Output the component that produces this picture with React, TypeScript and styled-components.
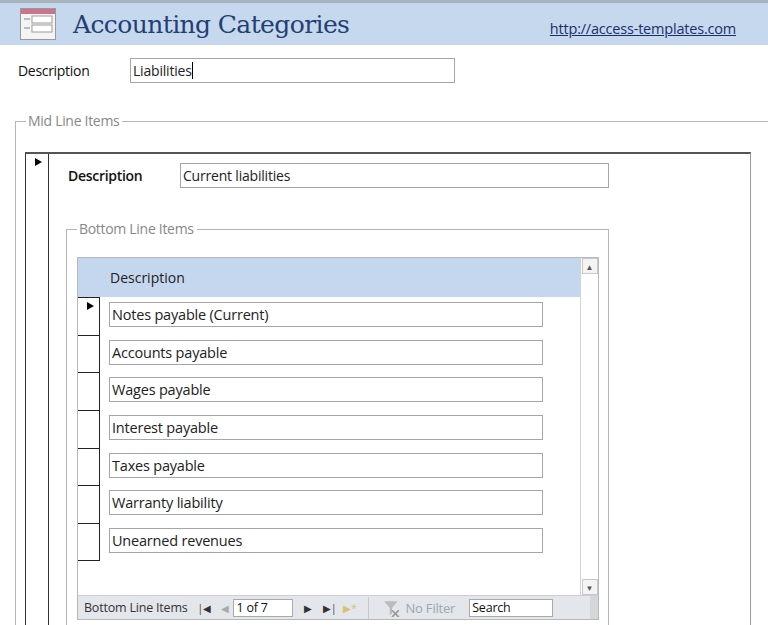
import React from "react";
import styled, { createGlobalStyle } from "styled-components";

const Global = createGlobalStyle`
  html, body { margin: 0; padding: 0; background: #fff; }
  body { font-family: "Open Sans", "Noto Sans", sans-serif; color: #222; overflow: hidden; }
`;

const Page = styled.div`
  width: 768px; height: 625px; overflow: hidden; position: relative;
`;
const Header = styled.div`
  height: 42px; border-top: 3px solid #a9b3bf; background: #c6d8ee;
  display: flex; align-items: center; padding: 0 32px 0 20px;
`;
const Title = styled.div`
  font-family: "DejaVu Serif", "Liberation Serif", serif; font-size: 25px;
  color: #243f72; margin-left: 17px; flex: 1; letter-spacing: -0.6px;
`;
const Link = styled.a`
  font-family: "Open Sans", sans-serif; font-size: 14.5px; color: #1a2f6a;
  text-decoration: underline; margin-top: 8px; letter-spacing: -0.2px;
`;
const TopRow = styled.div`
  display: flex; align-items: center; padding: 13px 0 0 18px; height: 24px;
`;
const Label = styled.div<{ $w: number; $bold?: boolean }>`
  width: ${p => p.$w}px; font-size: 14px; font-weight: ${p => (p.$bold ? 600 : 400)};
  letter-spacing: -0.3px; color: #111;
`;
const Input = styled.div<{ $w: number; $h?: number }>`
  width: ${p => p.$w}px; height: ${p => p.$h ?? 23}px; box-sizing: border-box;
  border: 1px solid #a6a6a6; font-size: 14px; padding-left: 2px; letter-spacing: -0.2px;
  display: flex; align-items: center; background: #fff; color: #222;
`;
const Caret = styled.span` display: inline-block; width: 1px; height: 17px; background: #000; `;

const Group = styled.div<{ $w: number }>`
  position: relative; border: 1px solid #b5b5b5; border-bottom: none;
  width: ${p => p.$w}px; box-sizing: border-box;
`;
const Legend = styled.div`
  position: absolute; top: -10px; left: 10px; background: #fff; padding: 0 3px 0 2px;
  font-size: 14px; color: #888; letter-spacing: -0.3px; line-height: 18px;
`;
const Sub = styled.div`
  border-top: 2px solid #555; border-left: 1px solid #333; border-right: 1px solid #999;
  margin: 30px 0 0 9px; width: 726px; height: 480px; display: flex; box-sizing: border-box;
`;
const Selector = styled.div`
  width: 23px; border-right: 1px solid #333; padding-top: 4px; padding-left: 9px; box-sizing: border-box;
`;
const Arrow = styled.div<{ $s?: number }>`
  width: 0; height: 0; border-left: ${p => (p.$s ?? 7)}px solid #000;
  border-top: ${p => (p.$s ?? 7) * 0.7}px solid transparent; border-bottom: ${p => (p.$s ?? 7) * 0.7}px solid transparent;
`;
const SubBody = styled.div` flex: 1; padding: 9px 0 0 19px; `;
const DescRow = styled.div` display: flex; align-items: center; `;
const Bottom = styled.div`
  margin-top: 41px; margin-left: -2px; width: 543px; height: 400px; position: relative;
  border: 1px solid #b5b5b5; border-bottom: none; box-sizing: border-box; padding: 27px 0 0 10px;
`;
const Sheet = styled.div`
  width: 522px; height: 363px; border: 1px solid #b8b8b8; box-sizing: border-box;
  display: grid; grid-template-columns: 1fr 18px; grid-template-rows: 1fr 24px;
`;
const Main = styled.div` display: flex; flex-direction: column; `;
const SheetHead = styled.div`
  height: 39px; background: #c5d7ee; font-size: 14px; font-weight: 500; color: #222;
  padding-left: 32px; display: flex; align-items: center; flex-shrink: 0;
`;
const Row = styled.div` display: flex; height: 37.7px; `;
const RowSel = styled.div<{ $last?: boolean }>`
  width: 22px; box-sizing: border-box; border-right: 1px solid #222;
  border-bottom: ${p => (p.$last ? "1px solid #222" : "none")};
  border-top: 1px solid #222; padding: 4px 0 0 9px;
`;
const RowInput = styled(Input)` margin: 5px 0 0 9px; height: 25px; font-size: 14.5px; `;
const Scroll = styled.div`
  background: #fff; border-left: 1px solid #d3d3d3; display: flex; flex-direction: column; justify-content: space-between; align-items: center;
`;
const ScrollBtn = styled.div`
  width: 16px; height: 16px; border: 1px solid #c8c8c8; box-sizing: border-box; display: flex; align-items: center; justify-content: center;
  font-size: 8px; color: #555; background: #f4f4f4;
`;
const Nav = styled.div`
  grid-column: 1 / 3; background: #e3e6ea; border-top: 1px solid #ccd; display: flex; align-items: center;
  font-size: 12.5px; color: #333; padding-left: 6px; letter-spacing: -0.2px;
`;
const NavBtn = styled.span<{ $c?: string; $ml?: number }>` color: ${p => p.$c ?? "#333"}; margin-left: ${p => p.$ml ?? 10}px; font-size: 10px; `;
const NavBox = styled.div<{ $w: number }>`
  width: ${p => p.$w}px; height: 18px; background: #fff; border: 1px solid #aaa; box-sizing: border-box;
  font-size: 12.5px; color: #111; padding-left: 2px; line-height: 16px;
`;
const Sep = styled.div` width: 1px; height: 22px; background: #c8c8c8; margin-left: 12px; `;
const NoFilter = styled.span` color: #9aa; margin-left: 4px; font-size: 13px; `;
const NavFill = styled.div` flex: 1; align-self: stretch; background: #d4d6da; margin-left: 37px; `;

const items = ["Notes payable (Current)", "Accounts payable", "Wages payable", "Interest payable", "Taxes payable", "Warranty liability", "Unearned revenues"];

const FormIcon = () => (
  <svg width="36" height="32" viewBox="0 0 36 32">
    <rect x="0.5" y="0.5" width="35" height="31" fill="#f4f4f4" stroke="#999" />
    <rect x="1" y="1" width="34" height="5" fill="#c9738c" />
    <rect x="4" y="10" width="6" height="2" fill="#bbb" />
    <rect x="4" y="19" width="6" height="2" fill="#bbb" />
    <rect x="12" y="8" width="20" height="7" fill="#fff" stroke="#999" />
    <rect x="12" y="17" width="20" height="7" fill="#fff" stroke="#999" />
  </svg>
);

const Funnel = () => (
  <svg width="18" height="18" viewBox="0 0 16 16" style={{ marginLeft: 14 }}>
    <path d="M1 2h12L8 8v5l-2 1V8z" fill="#bbb" />
    <path d="M8 10l6 6M14 10l-6 6" stroke="#999" strokeWidth="1.5" />
  </svg>
);

export default function App() {
  return (
    <Page>
      <Global />
      <Header>
        <FormIcon />
        <Title>Accounting Categories</Title>
        <Link>http://access-templates.com</Link>
      </Header>
      <TopRow>
        <Label $w={112}>Description</Label>
        <Input $w={325} $h={25}>Liabilities<Caret /></Input>
      </TopRow>
      <div style={{ height: 39 }} />
      <Group $w={760} style={{ marginLeft: 15, height: 520 }}>
        <Legend>Mid Line Items</Legend>
        <Sub>
          <Selector><Arrow $s={7} /></Selector>
          <SubBody>
            <DescRow>
              <Label $w={112} $bold>Description</Label>
              <Input $w={429} $h={25}>Current liabilities</Input>
            </DescRow>
            <Bottom>
              <Legend>Bottom Line Items</Legend>
              <Sheet>
                <Main>
                  <SheetHead>Description</SheetHead>
                  {items.map((t, i) => (
                    <Row key={t}>
                      <RowSel $last={i === items.length - 1}>{i === 0 && <Arrow $s={7} />}</RowSel>
                      <RowInput $w={434}>{t}</RowInput>
                    </Row>
                  ))}
                </Main>
                <Scroll>
                  <ScrollBtn>▲</ScrollBtn>
                  <ScrollBtn>▼</ScrollBtn>
                </Scroll>
                <Nav>
                  Bottom Line Items
                  <NavBtn $ml={10}>|◀</NavBtn>
                  <NavBtn $c="#aaa" $ml={10}>◀</NavBtn>
                  <span style={{ marginLeft: 5 }}><NavBox $w={60}>1 of 7</NavBox></span>
                  <NavBtn $ml={11}>▶</NavBtn>
                  <NavBtn $ml={11}>▶|</NavBtn>
                  <NavBtn $c="#d8c070" $ml={7}>▶*</NavBtn>
                  <Sep />
                  <Funnel />
                  <NoFilter>No Filter</NoFilter>
                  <span style={{ marginLeft: 14 }}><NavBox $w={84}>Search</NavBox></span>
                  <NavFill />
                </Nav>
              </Sheet>
            </Bottom>
          </SubBody>
        </Sub>
      </Group>
    </Page>
  );
}
